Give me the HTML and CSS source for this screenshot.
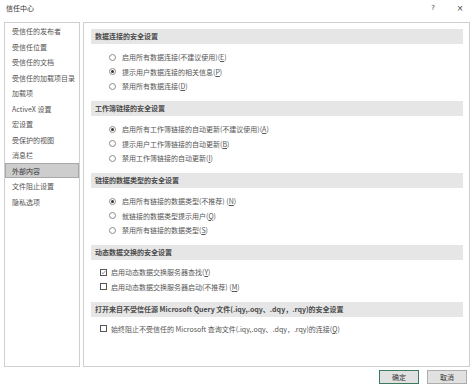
FILE: index.html
```html
<!DOCTYPE html>
<html lang="zh-CN">
<head>
<meta charset="utf-8">
<title>信任中心</title>
<link rel="stylesheet" href="styles.css">
</head>
<body>
<div class="dialog">
  <div class="titlebar">
    <span class="title">信任中心</span>
    <span class="spacer"></span>
    <span class="tb-btn help">?</span>
    <span class="tb-btn close">×</span>
  </div>
  <div class="main">
    <ul class="nav">
      <li>受信任的发布者</li>
      <li>受信任位置</li>
      <li>受信任的文档</li>
      <li>受信任的加载项目录</li>
      <li>加载项</li>
      <li>ActiveX 设置</li>
      <li>宏设置</li>
      <li>受保护的视图</li>
      <li>消息栏</li>
      <li class="selected">外部内容</li>
      <li>文件阻止设置</li>
      <li>隐私选项</li>
    </ul>
    <div class="content">
      <section class="sec">
        <div class="hdr">数据连接的安全设置</div>
        <div class="opt radio-opt"><span class="radio"></span>启用所有数据连接(不建议使用)(<u>E</u>)</div>
        <div class="opt radio-opt"><span class="radio on"></span>提示用户数据连接的相关信息(<u>P</u>)</div>
        <div class="opt radio-opt"><span class="radio"></span>禁用所有数据连接(<u>D</u>)</div>
      </section>
      <section class="sec">
        <div class="hdr">工作簿链接的安全设置</div>
        <div class="opt radio-opt"><span class="radio on"></span>启用所有工作簿链接的自动更新(不建议使用)(<u>A</u>)</div>
        <div class="opt radio-opt"><span class="radio"></span>提示用户工作簿链接的自动更新(<u>B</u>)</div>
        <div class="opt radio-opt"><span class="radio"></span>禁用工作簿链接的自动更新(<u>I</u>)</div>
      </section>
      <section class="sec">
        <div class="hdr">链接的数据类型的安全设置</div>
        <div class="opt radio-opt"><span class="radio on"></span>启用所有链接的数据类型(不推荐) (<u>N</u>)</div>
        <div class="opt radio-opt"><span class="radio"></span>就链接的数据类型提示用户(<u>Q</u>)</div>
        <div class="opt radio-opt"><span class="radio"></span>禁用所有链接的数据类型(<u>S</u>)</div>
      </section>
      <section class="sec checks">
        <div class="hdr">动态数据交换的安全设置</div>
        <div class="opt check-opt"><span class="check on"><svg viewBox="0 0 8 8" width="7" height="7"><path d="M1.3 4.2 L3.2 6 L6.8 1.8" fill="none" stroke="#333" stroke-width="1"/></svg></span>启用动态数据交换服务器查找(<u>Y</u>)</div>
        <div class="opt check-opt"><span class="check"></span>启用动态数据交换服务器启动(不推荐) (<u>M</u>)</div>
      </section>
      <section class="sec checks">
        <div class="hdr">打开来自不受信任源 Microsoft Query 文件(.iqy,.oqy、.dqy，.rqy)的安全设置</div>
        <div class="opt check-opt"><span class="check"></span>始终阻止不受信任的 Microsoft 查询文件(.iqy,.oqy、.dqy，.rqy)的连接(<u>Q</u>)</div>
      </section>
    </div>
  </div>
  <div class="footer">
    <button class="btn primary">确定</button>
    <button class="btn">取消</button>
  </div>
</div>
</body>
</html>
```
FILE: styles.css
```css
* { box-sizing: border-box; }
html, body {
  margin: 0;
  padding: 0;
  background: #ffffff;
}
body {
  width: 474px;
  height: 389px;
  overflow: hidden;
  font-family: "Noto Sans CJK SC", "Noto Sans", sans-serif;
  color: #444;
}
.dialog {
  width: 474px;
  height: 389px;
  display: flex;
  flex-direction: column;
  background: #fff;
}
.titlebar {
  height: 22px;
  display: flex;
  align-items: flex-start;
  padding: 0 0 0 6px;
}
.title {
  font-size: 7px;
  line-height: 17px;
  color: #333;
}
.spacer { flex: 1; }
.tb-btn {
  font-size: 8px;
  line-height: 17px;
  color: #444;
  font-family: "DejaVu Sans", sans-serif;
  text-align: center;
}
.help { width: 10px; margin-right: 17px; font-size: 7px; }
.close { width: 10px; margin-right: 9px; }
.main {
  height: 345px;
  display: flex;
  gap: 3px;
  padding: 0 4px;
}
.nav {
  list-style: none;
  margin: 0;
  padding: 0;
  width: 76px;
  border: 1px solid #cfcfcf;
  font-size: 7px;
  color: #555;
}
.nav li {
  height: 15.5px;
  line-height: 15.5px;
  padding-left: 6px;
  white-space: nowrap;
  border: 1px solid transparent;
}
.nav li.selected {
  background: #cdcdcd;
  border-color: #a8a8a8;
  color: #333;
}
.content {
  flex: 1;
  border: 1px solid #cfcfcf;
  padding: 6px 6px 0 7px;
  font-size: 7px;
}
.sec { margin-bottom: 7.5px; }
.hdr {
  height: 15px;
  line-height: 15px;
  background: #e6e6e6;
  padding-left: 4px;
  font-weight: 700;
  color: #4a4a4a;
  font-size: 7px;
  white-space: nowrap;
  margin-bottom: 6px;
}
.checks .hdr { margin-bottom: 5px; }
.opt {
  height: 14.5px;
  display: flex;
  align-items: center;
  white-space: nowrap;
  color: #555;
}
.opt u { text-underline-offset: 1px; }
.radio-opt { padding-left: 18px; }
.check-opt { padding-left: 9px; }
.radio {
  width: 7px;
  height: 7px;
  border: 1px solid #8a8a8a;
  border-radius: 50%;
  margin-right: 6px;
  display: flex;
  align-items: center;
  justify-content: center;
  flex: none;
  background: #fff;
}
.radio.on::after {
  content: "";
  width: 3px;
  height: 3px;
  border-radius: 50%;
  background: #333;
}
.check {
  width: 7px;
  height: 7px;
  border: 1px solid #555;
  margin-right: 4px;
  flex: none;
  display: flex;
  align-items: center;
  justify-content: center;
  background: #fff;
}
.check svg { display: block; }
.footer {
  height: 22px;
  display: flex;
  justify-content: flex-end;
  align-items: flex-start;
  gap: 8px;
  padding: 3px 7px 0 0;
}
.btn {
  width: 40px;
  height: 14px;
  margin: 0;
  padding: 0;
  font-family: "Noto Sans CJK SC", sans-serif;
  font-size: 7px;
  line-height: 12px;
  color: #333;
  background: #e1e1e1;
  border: 1px solid #adadad;
}
.btn.primary {
  border: 1px solid #3e7a5c;
}
```
